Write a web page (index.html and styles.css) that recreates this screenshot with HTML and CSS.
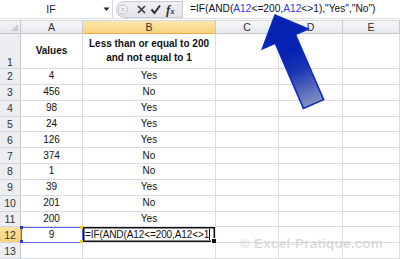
FILE: index.html
```html
<!DOCTYPE html>
<html>
<head>
<meta charset="utf-8">
<link rel="stylesheet" href="styles.css">
</head>
<body>
<div class="page">
  <div class="fbar">
    <div class="namebox">
      <span class="nb-text">IF</span>
      <svg class="dd" width="8" height="5" viewBox="0 0 8 5"><path d="M0.5 0.5 H6.5 L3.5 4 Z" fill="#222"/></svg>
    </div>
    <div class="fx-pill">
      <svg width="64" height="17" viewBox="0 0 64 17">
        <circle cx="6" cy="8.5" r="4.5" fill="#f2f3f5" stroke="#c2c6cc"/>
        <path d="M4 7.5 H8 M4 9.5 H8" stroke="#b5b9c0" stroke-width="0.8"/>
        <path d="M21 5 L28 12 M28 5 L21 12" stroke="#3a3a3a" stroke-width="1.7"/>
        <path d="M34.5 8.5 L37.5 12 L43 4.5" stroke="#2e2e2e" stroke-width="2" fill="none"/>
      </svg>
      <span class="fx"><i>f</i><span class="fx-x">x</span></span>
    </div>
    <div class="formula">=IF(AND(<span class="ref">A12</span>&lt;=200,<span class="ref">A12</span>&lt;&gt;1),"Yes","No")</div>
  </div>

  <div class="sheet">
    <div class="corner"></div>
    <div class="ch">A</div>
    <div class="ch sel">B</div>
    <div class="ch">C</div>
    <div class="ch">D</div>
    <div class="ch">E</div>

    <div class="rh rh1">1</div>
    <div class="c bold">Values</div>
    <div class="c bold">Less than or equal to 200<br>and not equal to 1</div>
    <div class="c"></div><div class="c"></div><div class="c"></div>

    <div class="rh">2</div><div class="c">4</div><div class="c">Yes</div><div class="c"></div><div class="c"></div><div class="c"></div>
    <div class="rh">3</div><div class="c">456</div><div class="c">No</div><div class="c"></div><div class="c"></div><div class="c"></div>
    <div class="rh">4</div><div class="c">98</div><div class="c">Yes</div><div class="c"></div><div class="c"></div><div class="c"></div>
    <div class="rh">5</div><div class="c">24</div><div class="c">Yes</div><div class="c"></div><div class="c"></div><div class="c"></div>
    <div class="rh">6</div><div class="c">126</div><div class="c">Yes</div><div class="c"></div><div class="c"></div><div class="c"></div>
    <div class="rh">7</div><div class="c">374</div><div class="c">No</div><div class="c"></div><div class="c"></div><div class="c"></div>
    <div class="rh">8</div><div class="c">1</div><div class="c">No</div><div class="c"></div><div class="c"></div><div class="c"></div>
    <div class="rh">9</div><div class="c">39</div><div class="c">Yes</div><div class="c"></div><div class="c"></div><div class="c"></div>
    <div class="rh">10</div><div class="c">201</div><div class="c">No</div><div class="c"></div><div class="c"></div><div class="c"></div>
    <div class="rh">11</div><div class="c">200</div><div class="c">Yes</div><div class="c"></div><div class="c"></div><div class="c"></div>
    <div class="rh sel">12</div>
    <div class="c refsel">9<span class="h h-tl"></span><span class="h h-bl"></span><span class="h h-tr"></span><span class="h h-br"></span></div>
    <div class="c edit">=IF(AND(A12&lt;=200,A12&lt;&gt;1<span class="caret"></span><span class="fill"></span></div>
    <div class="c"></div><div class="c"></div><div class="c"></div>
    <div class="rh">13</div><div class="c"></div><div class="c"></div><div class="c"></div><div class="c"></div><div class="c"></div>
  </div>

  <div class="watermark">© Excel-Pratique.com</div>

  <svg class="arrow" width="400" height="259" viewBox="0 0 400 259">
    <defs>
      <linearGradient id="ag" gradientUnits="userSpaceOnUse" x1="0" y1="40" x2="0" y2="97">
        <stop offset="0" stop-color="#0622b2"/>
        <stop offset="0.35" stop-color="#1b35b4"/>
        <stop offset="1" stop-color="#8391c2"/>
      </linearGradient>
    </defs>
    <g transform="translate(275,15) rotate(-23.4)">
      <polygon points="0,0 25,26 11,26 11,97 -11,97 -11,26 -25,26" fill="url(#ag)" stroke="#0d2bc4" stroke-width="1.6" stroke-linejoin="miter"/>
    </g>
  </svg>
</div>
</body>
</html>
```

FILE: styles.css
```css
* { box-sizing: border-box; }
html, body { margin: 0; padding: 0; }
body {
  width: 400px;
  height: 259px;
  overflow: hidden;
  background: #fff;
  font-family: "Liberation Sans", Arial, sans-serif;
  color: #111;
}
.page {
  position: relative;
  width: 400px;
  height: 259px;
  overflow: hidden;
}

/* formula bar */
.fbar {
  display: flex;
  height: 19px;
  border-bottom: 1px solid #dfe3e8;
  background: #fff;
}
.namebox {
  width: 113px;
  display: flex;
  align-items: center;
  position: relative;
  border-right: 1px solid #d5d9df;
}
.nb-text {
  width: 102px;
  text-align: center;
  font-size: 10.5px;
  color: #222;
}
.dd { margin-left: 1px; }
.fx-pill {
  margin-left: 3px;
  margin-top: 1px;
  width: 66px;
  height: 17px;
  background: linear-gradient(#eef0f3, #e2e5e9);
  border: 1px solid #c9cdd3;
  border-right: none;
  border-radius: 9px 0 0 9px;
  display: flex;
  align-items: center;
  position: relative;
}
.fx-pill svg { display: block; flex: none; }
.fx {
  position: absolute;
  left: 49px;
  top: 0px;
  font-family: "Liberation Serif", "Times New Roman", serif;
  font-size: 13px;
  color: #333;
  line-height: 15px;
}
.fx i { font-weight: bold; }
.fx-x { font-style: italic; font-size: 9px; font-weight: bold; }
.formula {
  flex: 1;
  border-left: 1px solid #c9cdd3;
  padding-left: 7px;
  font-size: 10.2px;
  line-height: 18px;
  white-space: nowrap;
  color: #111;
}
.ref { color: #3434f0; }

/* sheet */
.sheet {
  margin-top: 1px;
  display: grid;
  grid-template-columns: 21px 62px 133px 63px 64px 1fr;
  grid-template-rows: 14px 35px repeat(12, 15.85px);
  font-size: 10px;
}
.corner {
  background: linear-gradient(#f4f5f7, #e3e6ea);
  border-right: 1px solid #c3c7cd;
  border-bottom: 1px solid #c3c7cd;
  border-top: 1px solid #d5d9df;
  position: relative;
}
.corner::after {
  content: "";
  position: absolute;
  right: 2px;
  bottom: 2px;
  border-left: 7px solid transparent;
  border-bottom: 7px solid #c9ccd1;
}
.ch {
  background: linear-gradient(#f6f7f9, #e5e8ec);
  border-right: 1px solid #c8ccd2;
  border-bottom: 1px solid #c3c7cd;
  border-top: 1px solid #d5d9df;
  display: flex;
  align-items: center;
  justify-content: center;
  color: #333;
  font-size: 10.5px;
}
.ch.sel {
  background: linear-gradient(#fbe7ae, #f8d37a);
  border-bottom: 1px solid #efae45;
  border-right-color: #e9c27a;
  color: #333;
}
.rh {
  background: #eceef1;
  border-right: 1px solid #c3c7cd;
  border-bottom: 1px solid #d4d7dc;
  display: flex;
  align-items: center;
  justify-content: center;
  color: #333;
  font-size: 10.5px;
}
.rh1 { align-items: flex-end; padding-bottom: 0px; }
.rh.sel {
  background: linear-gradient(#fbe3a2, #f7d27b);
  border-right: 1px solid #efae45;
}
.c {
  border-right: 1px solid #dadcdf;
  border-bottom: 1px solid #dadcdf;
  display: flex;
  align-items: center;
  justify-content: center;
  text-align: center;
  white-space: nowrap;
  color: #111;
  position: relative;
  line-height: 14px;
}
.bold { font-weight: bold; }
.refsel {
  outline: 1px solid #5b63f2;
  outline-offset: -1px;
}
.h {
  position: absolute;
  width: 3px;
  height: 3px;
}
.h-tl { left: -1px; top: -1px; background: #2b38d8; }
.h-bl { left: -1px; bottom: -1px; background: #2b38d8; }
.h-tr { right: -1px; top: -1px; background: #e8d21c; }
.h-br { right: -1px; bottom: -1px; background: #e8d21c; }
.edit {
  justify-content: flex-start;
  padding-left: 2px;
  box-shadow: inset 0 0 0 1.5px #111;
  overflow: visible;
  letter-spacing: -0.1px;
}
.caret {
  display: inline-block;
  width: 1px;
  height: 11px;
  background: #000;
  margin-left: 0;
}
.fill {
  position: absolute;
  right: -2px;
  bottom: -2px;
  width: 4px;
  height: 4px;
  background: #111;
  border: 1px solid #fff;
  box-sizing: content-box;
}

/* overlays */
.watermark {
  position: absolute;
  left: 240px;
  top: 236px;
  font-size: 13.5px;
  font-weight: bold;
  color: rgba(190, 190, 190, 0.55);
  white-space: nowrap;
  letter-spacing: 0.2px;
}
.arrow {
  position: absolute;
  left: 0;
  top: 0;
  pointer-events: none;
}
```
